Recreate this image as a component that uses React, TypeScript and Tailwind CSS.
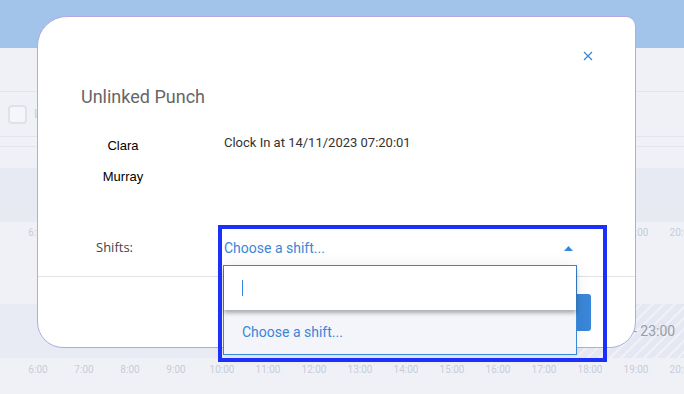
import React from "react";

const hours = ["6:00", "7:00", "8:00", "9:00", "10:00", "11:00", "12:00", "13:00", "14:00", "15:00", "16:00", "17:00", "18:00", "19:00", "20:00"];

const HourRow = ({ className }: { className: string }) => (
    <div className={"flex items-center pl-[15px] " + className}>
        {hours.map((h) => (
            <div key={h} className="w-[46px] shrink-0 text-center text-[10px] text-[#c8ccd8]">
                {h}
            </div>
        ))}
    </div>
);

const App = () => {
    return (
        <div className="relative w-[684px] h-[394px] overflow-hidden bg-[#f0f1f7] font-['Roboto',sans-serif]">
            {/* timeline behind the modal */}
            <div className="h-[48px] bg-[#a2c3ea]" />
            <div className="h-[44px] border-b border-[#e3e5ee]" />
            <div className="h-[45px] border-b border-[#e3e5ee] flex items-center pl-[8px]">
                <div className="w-[19px] h-[19px] rounded-[4px] border-2 border-[#dfe2ea] bg-[#f5f6fa]" />
                <span className="ml-[7px] text-[13px] text-[#c9ccd6]">L</span>
            </div>
            <div className="h-[10px] border-b border-[#e3e5ee]" />
            <div className="h-[21px]" />
            <div className="h-[54px] bg-[#e7eaf3]" />
            <HourRow className="h-[20px]" />
            <div className="h-[62px]" />
            <div className="h-[54px] bg-[#e8ebf4] flex">
                <div className="flex-1" />
                <div className="w-[109px] flex items-center pl-[58px] bg-[repeating-linear-gradient(135deg,#e5e8f2_0px,#e5e8f2_6px,#eff1f7_6px,#eff1f7_8px)]">
                    <span className="text-[14px] text-[#9a9da6] whitespace-nowrap">- 23:00</span>
                </div>
            </div>
            <HourRow className="h-[22px]" />

            {/* modal */}
            <div className="absolute left-[37px] top-[16px] w-[599px] h-[332px] bg-white border border-[#b2abe1] rounded-tl-[30px] rounded-tr-[10px] rounded-b-[26px] flex flex-col">
                <div className="flex justify-end pt-[34px] pr-[42px]">
                    <svg width="10" height="10" viewBox="0 0 10 10">
                        <path d="M1 1L9 9M9 1L1 9" stroke="#3a86d8" strokeWidth="1.3" />
                    </svg>
                </div>
                <div className="pl-[43px]">
                    <h2 className="mt-[25px] text-[18px] leading-[22px] text-[#666]">Unlinked Punch</h2>
                    <div className="flex mt-[30px]">
                        <div className="w-[84px] flex flex-col items-center font-['Liberation_Sans',Arial,sans-serif] text-[13px] leading-[16px] text-black">
                            <span>Clara</span>
                            <span className="mt-[15px]">Murray</span>
                        </div>
                        <div className="ml-[59px] -mt-[3px] text-[13px] leading-[16px] text-[#333]">Clock In at 14/11/2023 07:20:01</div>
                    </div>
                    <div className="flex items-center h-[24px] mt-[51px]">
                        <div className="w-[84px] pl-[15px] font-['Open_Sans',sans-serif] text-[13px] text-[#444]">Shifts:</div>
                        <div className="ml-[59px] w-[353px] flex items-center justify-between pr-[4px]">
                            <span className="text-[14px] text-[#3a86d8]">Choose a shift...</span>
                            <svg width="9" height="5" viewBox="0 0 9 5">
                                <path d="M4.5 0L9 5H0Z" fill="#3a86d8" />
                            </svg>
                        </div>
                    </div>
                </div>
                <div className="mt-[16px] border-t border-[#e2e2e2]" />
                <div className="flex justify-end pt-[17px] pr-[44px]">
                    <div className="w-[80px] h-[37px] rounded-[3px] bg-[#3a86d8]" />
                </div>
            </div>

            {/* open dropdown */}
            <div className="absolute left-[223px] top-[265px] w-[354px] h-[90px] border border-[#3a86d8] bg-[#f3f5fa] flex flex-col shadow-[0_0_14px_rgba(0,0,0,0.08)]">
                <div className="h-[44px] bg-white flex items-center pl-[18px] shadow-[0_3px_4px_rgba(0,0,0,0.3)]">
                    <div className="w-px h-[16px] bg-[#3a86d8]" />
                </div>
                <div className="flex-1 flex items-center pl-[18px] text-[14px] text-[#3a86d8]">Choose a shift...</div>
            </div>

            {/* highlight */}
            <div className="absolute left-[218px] top-[225px] w-[389px] h-[137px] border-4 border-[#1b30fb]" />
        </div>
    );
};

export default App;
